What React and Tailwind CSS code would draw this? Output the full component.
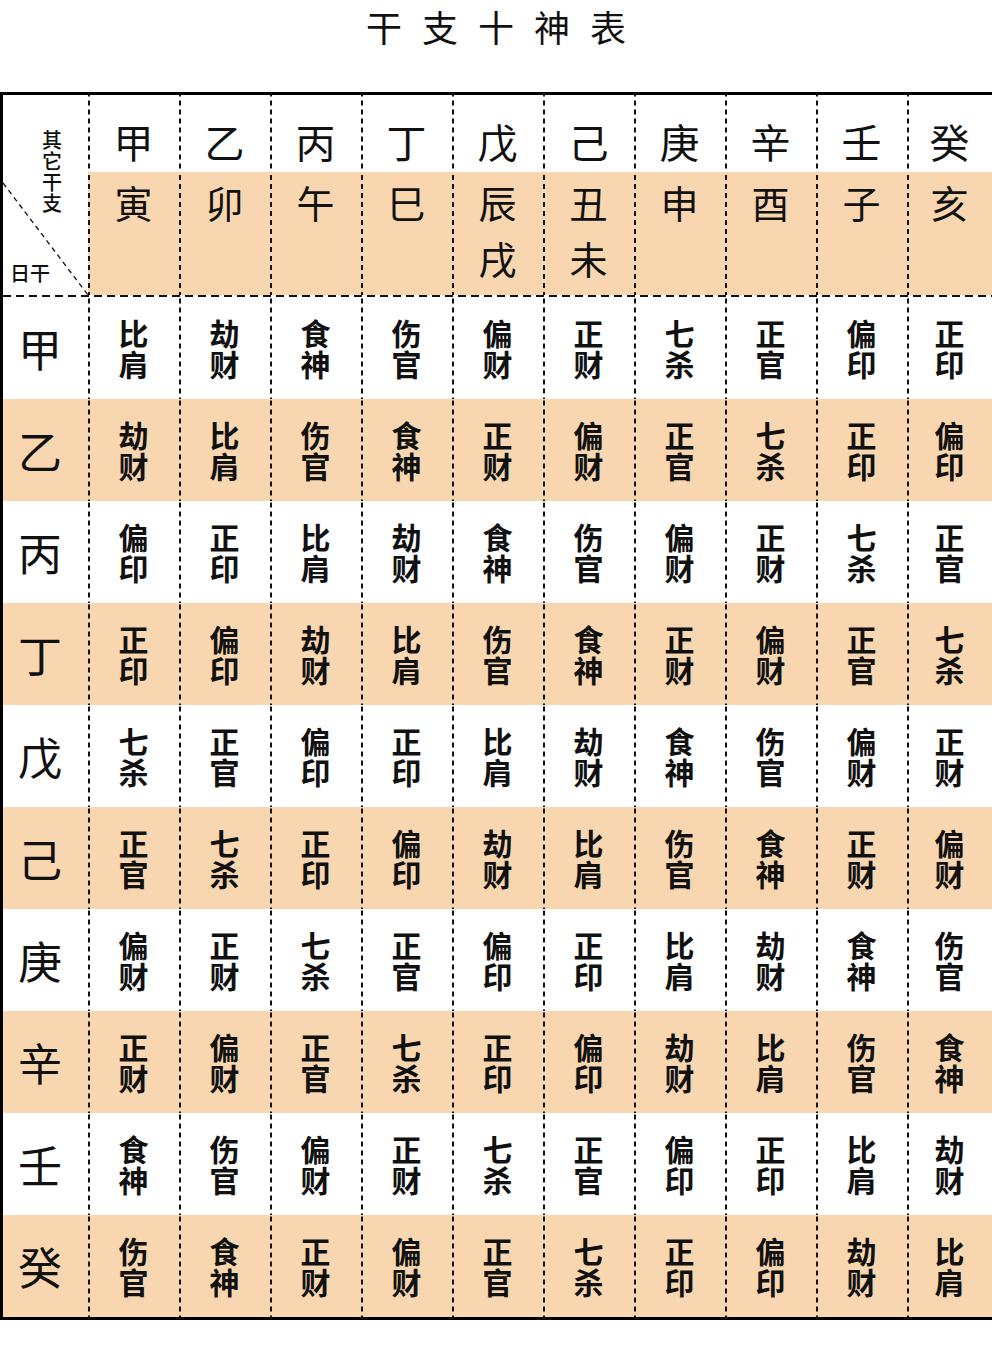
const stems = ["甲", "乙", "丙", "丁", "戊", "己", "庚", "辛", "壬", "癸"];
const branches = [["寅"], ["卯"], ["午"], ["巳"], ["辰", "戌"], ["丑", "未"], ["申"], ["酉"], ["子"], ["亥"]];

const gods = [
  ["比肩", "劫财", "食神", "伤官", "偏财", "正财", "七杀", "正官", "偏印", "正印"],
  ["劫财", "比肩", "伤官", "食神", "正财", "偏财", "正官", "七杀", "正印", "偏印"],
  ["偏印", "正印", "比肩", "劫财", "食神", "伤官", "偏财", "正财", "七杀", "正官"],
  ["正印", "偏印", "劫财", "比肩", "伤官", "食神", "正财", "偏财", "正官", "七杀"],
  ["七杀", "正官", "偏印", "正印", "比肩", "劫财", "食神", "伤官", "偏财", "正财"],
  ["正官", "七杀", "正印", "偏印", "劫财", "比肩", "伤官", "食神", "正财", "偏财"],
  ["偏财", "正财", "七杀", "正官", "偏印", "正印", "比肩", "劫财", "食神", "伤官"],
  ["正财", "偏财", "正官", "七杀", "正印", "偏印", "劫财", "比肩", "伤官", "食神"],
  ["食神", "伤官", "偏财", "正财", "七杀", "正官", "偏印", "正印", "比肩", "劫财"],
  ["伤官", "食神", "正财", "偏财", "正官", "七杀", "正印", "偏印", "劫财", "比肩"],
];

// dashed left edge drawn as a repeating gradient so dash length stays fixed
const dashLeft =
  "bg-[linear-gradient(to_bottom,#111_55%,transparent_55%)] bg-[length:1.5px_9px] bg-repeat-y bg-left";

const grid = "grid grid-cols-[85px_repeat(9,91px)_1fr]";

function CornerCell() {
  return (
    <div className="relative h-[200px] bg-white">
      <svg className="absolute inset-0 h-full w-full" viewBox="0 0 85 200" preserveAspectRatio="none">
        <line x1="0" y1="88" x2="85" y2="200" stroke="#111" strokeWidth="1.3" strokeDasharray="5 4" />
      </svg>
      <div className="absolute left-[39px] top-[34px] flex flex-col text-[20px] leading-[21px] font-medium text-[#111]">
        <span>其</span>
        <span>它</span>
        <span>干</span>
        <span>支</span>
      </div>
      <div className="absolute bottom-[12px] left-[7px] text-[20px] leading-[20px] font-medium text-[#111]">日干</div>
    </div>
  );
}

function HeaderCol({ stem, branch }) {
  return (
    <div className={`flex h-[200px] flex-col ${dashLeft}`}>
      <div className="h-[77px] pt-[26px] text-center text-[40px] leading-[40px] font-normal text-[#111]">{stem}</div>
      <div className={`flex h-[123px] flex-col items-center bg-[#f8d7b0] pt-[2px] text-[38px] leading-[56px] font-normal text-[#111] ${dashLeft}`}>
        {branch.map((b) => (
          <span key={b}>{b}</span>
        ))}
      </div>
    </div>
  );
}

function BodyRow({ stem, row, shaded }) {
  const bg = shaded ? "bg-[#f8d7b0]" : "bg-white";
  return (
    <div className={`${grid} h-[102px] ${bg}`}>
      <div className="flex items-center justify-center pr-[11px] text-[44px] leading-[44px] font-normal text-[#111]">
        {stem}
      </div>
      {row.map((g, i) => (
        <div
          key={i}
          className={`flex flex-col items-center justify-center text-[30px] leading-[31px] font-bold text-[#111] ${dashLeft}`}
        >
          <span>{g[0]}</span>
          <span>{g[1]}</span>
        </div>
      ))}
    </div>
  );
}

export default function App() {
  return (
    <div className="w-[992px] h-[1346px] overflow-hidden bg-white font-['Noto_Sans_CJK_SC','Noto_Sans',sans-serif]">
      <div className="flex h-[92px] justify-center pt-[1px]">
        <h1 className="pl-[20px] text-[36px] leading-[50px] font-normal tracking-[20px] text-[#111]">干支十神表</h1>
      </div>
      <div className="border-y-[3px] border-l-[3px] border-black">
        <div className={grid}>
          <CornerCell />
          {stems.map((s, i) => (
            <HeaderCol key={s} stem={s} branch={branches[i]} />
          ))}
        </div>
        <div className="h-[2px] bg-[linear-gradient(to_right,#111_62%,transparent_62%)] bg-[length:13px_2px] bg-repeat-x" />
        {stems.map((s, i) => (
          <BodyRow key={s} stem={s} row={gods[i]} shaded={i % 2 === 1} />
        ))}
      </div>
    </div>
  );
}
